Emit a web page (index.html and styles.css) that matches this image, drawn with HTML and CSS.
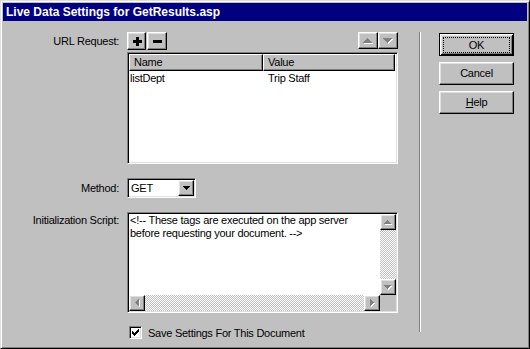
FILE: index.html
```html
<!DOCTYPE html>
<html>
<head>
<meta charset="utf-8">
<link rel="stylesheet" href="styles.css">
</head>
<body>
<div class="window">
  <div class="titlebar">Live Data Settings for GetResults.asp</div>
  <div class="content">
    <div class="form">
      <div class="row r-url">
        <div class="label">URL Request:</div>
        <div class="toolbar">
          <div class="tgroup">
            <div class="bevel tbtn plus"><svg width="9" height="9" viewBox="0 0 9 9"><path d="M3 0h3v3h3v3H6v3H3V6H0V3h3z" fill="#000"/></svg></div>
            <div class="bevel tbtn minus"><svg width="9" height="3" viewBox="0 0 9 3"><path d="M0 0h9v3H0z" fill="#000"/></svg></div>
          </div>
          <div class="tgroup tight">
            <div class="bevel tbtn arrowbtn"><svg width="10" height="6" viewBox="0 0 10 6"><path transform="translate(1 1)" d="M4 0h1v1h1v1h1v1h1v1h1v1H0V4h1V3h1V2h1V1h1z" fill="#fff"/><path d="M4 0h1v1h1v1h1v1h1v1h1v1H0V4h1V3h1V2h1V1h1z" fill="#808080"/></svg></div>
            <div class="bevel tbtn arrowbtn"><svg width="10" height="6" viewBox="0 0 10 6"><path transform="translate(1 1)" d="M0 0h9v1H8v1H7v1H6v1H5v1H4V4H3V3H2V2H1V1H0z" fill="#fff"/><path d="M0 0h9v1H8v1H7v1H6v1H5v1H4V4H3V3H2V2H1V1H0z" fill="#808080"/></svg></div>
          </div>
        </div>
      </div>
      <div class="row r-list">
        <div class="label"></div>
        <div class="sunken listview">
          <div class="lhead">
            <div class="hcell c1">Name</div>
            <div class="hcell c2">Value</div>
          </div>
          <div class="lrow">
            <div class="lcell c1">listDept</div>
            <div class="lcell c2">Trip Staff</div>
          </div>
        </div>
      </div>
      <div class="row r-method">
        <div class="label">Method:</div>
        <div class="sunken select">
          <div class="seltext">GET</div>
          <div class="bevel sbtn"><svg width="7" height="4" viewBox="0 0 7 4"><path d="M0 0h7v1H6v1H5v1H4v1H3V3H2V2H1V1H0z" fill="#000"/></svg></div>
        </div>
      </div>
      <div class="row r-script">
        <div class="label label-top">Initialization Script:</div>
        <div class="sunken textbox">
          <div class="tbtext">&lt;!-- These tags are executed on the app server<br>before requesting your document. --&gt;</div>
          <div class="vscroll">
            <div class="bevel sbtn"><svg width="8" height="5" viewBox="0 0 8 5"><path transform="translate(1 1)" d="M3 0h1v1h1v1h1v1h1v1H0V3h1V2h1V1h1z" fill="#fff"/><path d="M3 0h1v1h1v1h1v1h1v1H0V3h1V2h1V1h1z" fill="#808080"/></svg></div>
            <div class="track"></div>
            <div class="bevel sbtn"><svg width="8" height="5" viewBox="0 0 8 5"><path transform="translate(1 1)" d="M0 0h7v1H6v1H5v1H4v1H3V3H2V2H1V1H0z" fill="#fff"/><path d="M0 0h7v1H6v1H5v1H4v1H3V3H2V2H1V1H0z" fill="#808080"/></svg></div>
          </div>
          <div class="hscroll">
            <div class="bevel sbtn"><svg width="5" height="8" viewBox="0 0 5 8"><path transform="translate(1 1)" d="M3 0h1v7H3V6H2V5H1V4H0V3h1V2h1V1h1z" fill="#fff"/><path d="M3 0h1v7H3V6H2V5H1V4H0V3h1V2h1V1h1z" fill="#808080"/></svg></div>
            <div class="track"></div>
            <div class="bevel sbtn"><svg width="5" height="8" viewBox="0 0 5 8"><path transform="translate(1 1)" d="M0 0h1v1h1v1h1v1h1v1H3v1H2v1H1v1H0z" fill="#fff"/><path d="M0 0h1v1h1v1h1v1h1v1H3v1H2v1H1v1H0z" fill="#808080"/></svg></div>
          </div>
          <div class="corner"></div>
        </div>
      </div>
      <div class="row r-check">
        <div class="label"></div>
        <div class="checkwrap">
          <div class="checkbox"><svg width="7" height="7" viewBox="0 0 7 7"><path d="M0 2h1v3H0zM1 3h1v3H1zM2 4h1v3H2zM3 3h1v3H3zM4 2h1v3H4zM5 1h1v3H5zM6 0h1v3H6z" fill="#000"/></svg></div>
          <span class="checklabel">Save Settings For This Document</span>
        </div>
      </div>
    </div>
    <div class="separator"></div>
    <div class="buttons">
      <div class="btn default"><span class="focus">OK</span></div>
      <div class="btn bevel"><span>Cancel</span></div>
      <div class="btn bevel"><span><u>H</u>elp</span></div>
    </div>
  </div>
</div>
</body>
</html>
```
FILE: styles.css
```css
html, body {
  margin: 0;
  padding: 0;
  background: #c0c0c0;
}
body {
  font-family: "Liberation Sans", Arial, sans-serif;
  font-size: 11px;
  letter-spacing: -0.25px;
  color: #000;
}
.window {
  width: 530px;
  height: 349px;
  box-sizing: border-box;
  border: 1px solid;
  border-color: #dfdfdf #000 #000 #dfdfdf;
  box-shadow: inset 1px 1px #fff, inset -1px -1px #808080;
  padding: 2px;
  background: #c0c0c0;
  display: flex;
  flex-direction: column;
  overflow: hidden;
}
.titlebar {
  height: 18px;
  flex: none;
  background: #000080;
  color: #fff;
  font-weight: bold;
  font-size: 12px;
  letter-spacing: 0;
  display: flex;
  align-items: center;
  padding-left: 3px;
  white-space: nowrap;
}
.content {
  display: flex;
  padding-top: 11px;
}
.form {
  width: 395px;
  flex: none;
  display: flex;
  flex-direction: column;
}
.row {
  display: flex;
  gap: 8px;
}
.label {
  width: 116px;
  flex: none;
  text-align: right;
  line-height: 13px;
  white-space: nowrap;
}
.label-top {
  padding-top: 2px;
}
.bevel {
  box-sizing: border-box;
  background: #c0c0c0;
  border: 1px solid;
  border-color: #fff #000 #000 #fff;
  box-shadow: inset -1px -1px #808080, inset 1px 1px #dfdfdf;
  display: flex;
  align-items: center;
  justify-content: center;
}
.sunken {
  box-sizing: border-box;
  border: 1px solid;
  border-color: #808080 #fff #fff #808080;
  box-shadow: inset 1px 1px #000, inset -1px -1px #dfdfdf;
  padding: 1px;
  background: #fff;
}
svg {
  display: block;
  shape-rendering: crispEdges;
}

/* URL row */
.r-url {
  height: 18px;
  align-items: center;
}
.toolbar {
  width: 271px;
  height: 18px;
  display: flex;
  justify-content: space-between;
}
.tgroup {
  display: flex;
  gap: 1px;
}
.tgroup.tight {
  gap: 0;
}
.tbtn {
  height: 18px;
}
.plus {
  width: 19px;
  padding-left: 2px;
}
.minus {
  width: 20px;
  padding-left: 1px;
}
.arrowbtn {
  width: 20px;
  height: 17px;
}

/* List view */
.r-list {
  margin-top: 2px;
}
.listview {
  width: 271px;
  height: 112px;
}
.lhead {
  display: flex;
  height: 17px;
}
.hcell {
  box-sizing: border-box;
  height: 17px;
  background: #c0c0c0;
  border: 1px solid;
  border-color: #fff #000 #000 #fff;
  box-shadow: inset -1px -1px #808080;
  line-height: 15px;
  padding-left: 4px;
}
.hcell.c1 {
  width: 134px;
}
.hcell.c2 {
  width: 132px;
}
.lrow {
  display: flex;
  height: 13px;
  line-height: 13px;
  margin-top: 1px;
}
.lcell.c1 {
  width: 134px;
  padding-left: 1px;
  box-sizing: border-box;
}
.lcell.c2 {
  padding-left: 5px;
}

/* Method */
.r-method {
  margin-top: 14px;
  height: 20px;
  align-items: center;
}
.select {
  width: 69px;
  height: 20px;
  display: flex;
}
.seltext {
  flex: 1;
  line-height: 16px;
  padding-left: 2px;
}
.sbtn {
  width: 16px;
  height: 16px;
  flex: none;
}

/* Script textbox */
.r-script {
  margin-top: 14px;
  height: 101px;
}
.textbox {
  width: 271px;
  height: 101px;
  display: grid;
  grid-template-columns: 1fr 16px;
  grid-template-rows: 1fr 16px;
}
.tbtext {
  line-height: 13px;
  padding-left: 1px;
  white-space: nowrap;
  overflow: hidden;
}
.vscroll {
  display: flex;
  flex-direction: column;
}
.hscroll {
  display: flex;
}
.track {
  flex: 1;
  background-color: #fff;
  background-image: conic-gradient(#c0c0c0 25%, #fff 0 50%, #c0c0c0 0 75%, #fff 0);
  background-size: 2px 2px;
}
.corner {
  background: #c0c0c0;
}

/* Checkbox */
.r-check {
  margin-top: 13px;
  height: 13px;
}
.checkwrap {
  display: flex;
  align-items: center;
  padding-left: 2px;
}
.checkbox {
  width: 13px;
  height: 13px;
  box-sizing: border-box;
  border: 1px solid;
  border-color: #808080 #fff #fff #808080;
  box-shadow: inset 1px 1px #000, inset -1px -1px #dfdfdf;
  background: #fff;
  padding: 2px;
}
.checklabel {
  margin-left: 6px;
  line-height: 12px;
  white-space: nowrap;
}

/* Separator and buttons */
.separator {
  margin-left: 21px;
  width: 0;
  height: 300px;
  border-left: 1px solid #808080;
  border-right: 1px solid #fff;
  flex: none;
}
.buttons {
  margin-left: 18px;
  padding-top: 1px;
  display: flex;
  flex-direction: column;
  gap: 6px;
}
.btn {
  width: 75px;
  height: 23px;
  box-sizing: border-box;
  display: flex;
  align-items: center;
  justify-content: center;
  line-height: 13px;
}
.btn.default {
  background: #c0c0c0;
  border: 1px solid #000;
  box-shadow: inset 1px 1px #fff, inset -1px -1px #000, inset 2px 2px #dfdfdf, inset -2px -2px #808080;
  padding: 3px 3px 2px 3px;
  align-items: stretch;
}
.focus {
  flex: 1;
  border: 1px dotted #000;
  display: flex;
  align-items: center;
  justify-content: center;
}
```
